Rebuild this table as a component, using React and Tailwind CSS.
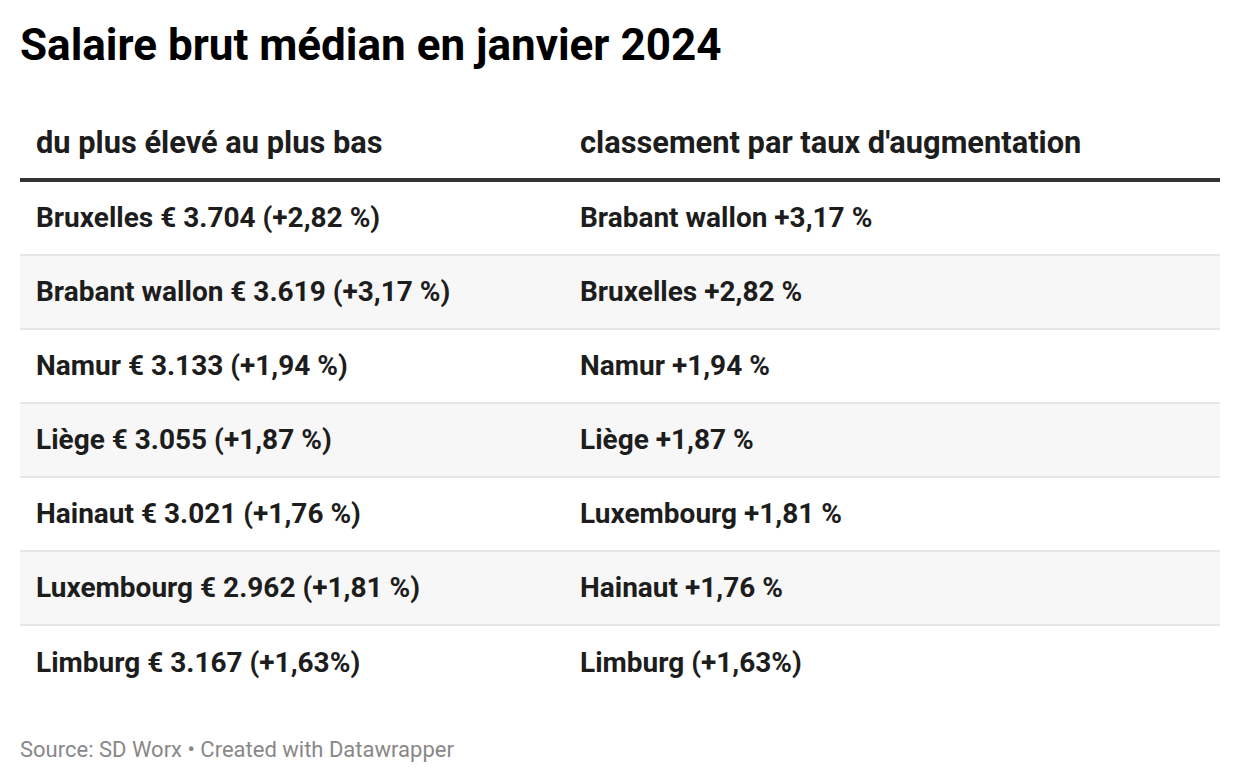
import React from "react";

const rows = [
  ["Bruxelles € 3.704 (+2,82 %)", "Brabant wallon +3,17 %"],
  ["Brabant wallon € 3.619 (+3,17 %)", "Bruxelles +2,82 %"],
  ["Namur € 3.133 (+1,94 %)", "Namur +1,94 %"],
  ["Liège € 3.055 (+1,87 %)", "Liège +1,87 %"],
  ["Hainaut € 3.021 (+1,76 %)", "Luxembourg +1,81 %"],
  ["Luxembourg € 2.962 (+1,81 %)", "Hainaut +1,76 %"],
  ["Limburg € 3.167 (+1,63%)", "Limburg (+1,63%)"],
];

export default function App() {
  return (
    <div
      className="w-[1240px] h-[784px] bg-white px-[20px] flex flex-col"
      style={{ fontFamily: "Roboto, 'Liberation Sans', sans-serif" }}
    >
      <h1 className="mt-[22px] h-[46px] flex items-center text-[44px] font-bold text-black leading-none">
        Salaire brut médian en janvier 2024
      </h1>
      <div className="mt-[34px] grid grid-cols-[544px_1fr] h-[80px] pt-[6px] border-b-4 border-[#333333] text-[30.8px] font-bold text-[#1d1d1d]">
        <div className="flex items-center px-[16px]">du plus élevé au plus bas</div>
        <div className="flex items-center px-[16px]">classement par taux d'augmentation</div>
      </div>
      <div className="flex flex-col">
        {rows.map((r, i) => (
          <div
            key={i}
            className={
              "grid grid-cols-[544px_1fr] h-[74px] text-[28px] font-bold text-[#1d1d1d] " +
              (i < rows.length - 1 ? "border-b-2 border-[#e6e6e6] " : "") +
              (i % 2 === 1 ? "bg-[#f7f7f7]" : "bg-white")
            }
          >
            <div className="flex items-center px-[16px]">{r[0]}</div>
            <div className="flex items-center px-[16px]">{r[1]}</div>
          </div>
        ))}
      </div>
      <div className="mt-[39px] text-[22px] text-[#888888] leading-none">
        Source: SD Worx • Created with Datawrapper
      </div>
    </div>
  );
}
